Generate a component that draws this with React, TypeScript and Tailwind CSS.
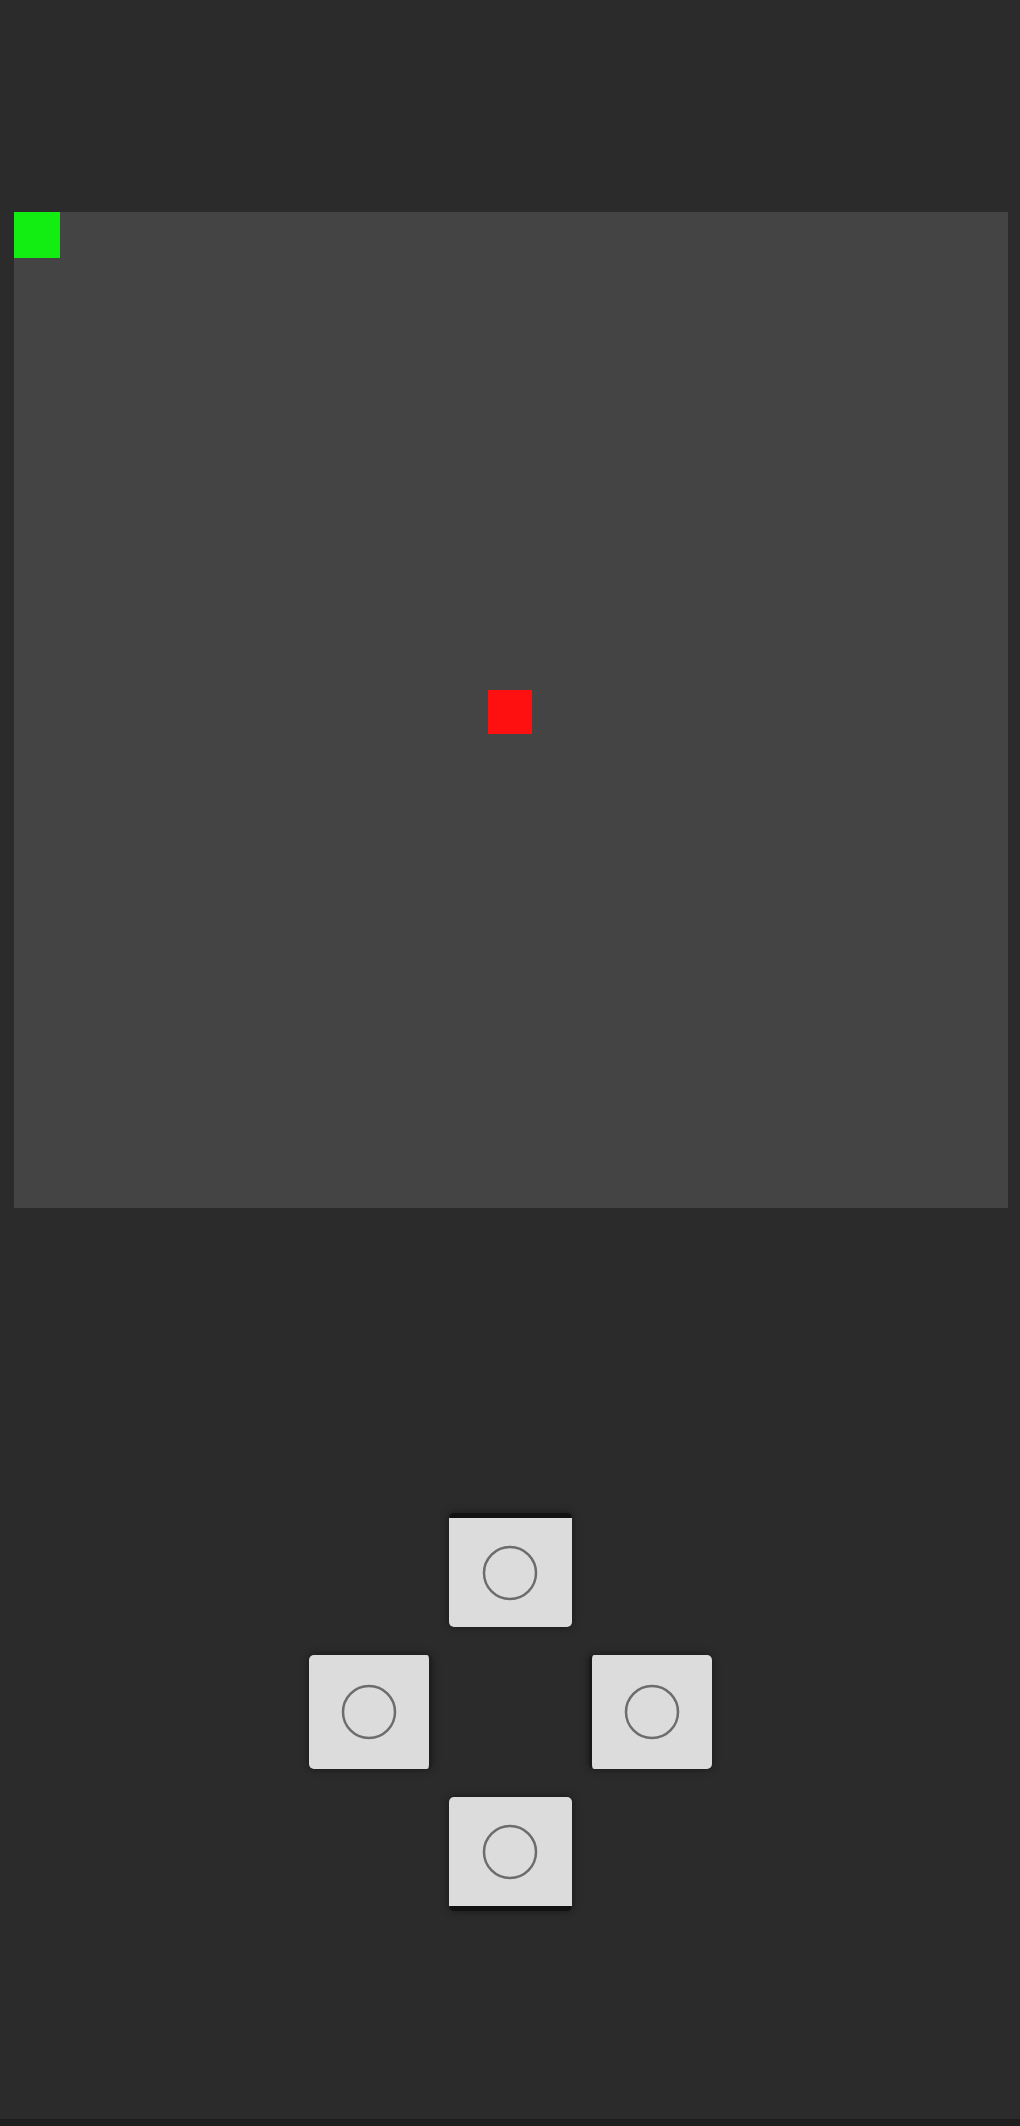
import React from 'react';

type Dir = 'up' | 'left' | 'right' | 'down';

function Ring() {
  return (
    <svg width="60" height="60" viewBox="0 0 60 60" aria-hidden="true">
      <circle cx="30" cy="30" r="26" fill="none" stroke="#6c6c6c" strokeWidth="2.5" />
    </svg>
  );
}

function PadButton({ dir }: { dir: Dir }) {
  // dark edge on one side, as in the screenshot
  const edge =
    dir === 'up'
      ? 'border-t-[5px] border-t-[#111]'
      : dir === 'down'
      ? 'border-b-[5px] border-b-[#111]'
      : dir === 'right'
      ? 'border-l-[3px] border-l-[#1a1a1a]'
      : 'border-r-[3px] border-r-[#1f1f1f]';

  return (
    <button
      aria-label={dir}
      className={`w-[123px] h-[114px] flex items-center justify-center bg-[#dcdcdc] rounded-[5px] shadow-[0_0_8px_rgba(0,0,0,0.45)] ${edge}`}
    >
      <Ring />
    </button>
  );
}

export default function App() {
  return (
    <div className="min-h-[2126px] bg-[#2b2b2b] flex flex-col">
      <div className="pt-[212px] pl-[14px]">
        {/* board */}
        <div className="relative w-[994px] h-[996px] bg-[#444444]">
          <div className="absolute left-0 top-0 w-[46px] h-[46px] bg-[#12ee12]" />
          <div className="absolute left-[474px] top-[478px] w-[44px] h-[44px] bg-[#ff1010]" />
        </div>
      </div>

      {/* controls */}
      <div className="mt-[305px] flex justify-center">
        <div className="grid grid-cols-[123px_123px_123px] grid-rows-[114px_114px_114px] gap-x-[17px] gap-y-[28px]">
          <div />
          <PadButton dir="up" />
          <div />
          <PadButton dir="left" />
          <div />
          <PadButton dir="right" />
          <div />
          <PadButton dir="down" />
          <div />
        </div>
      </div>

      <div className="flex-1" />
      <div className="h-[7px] bg-[#1e1e1e]" />
    </div>
  );
}
